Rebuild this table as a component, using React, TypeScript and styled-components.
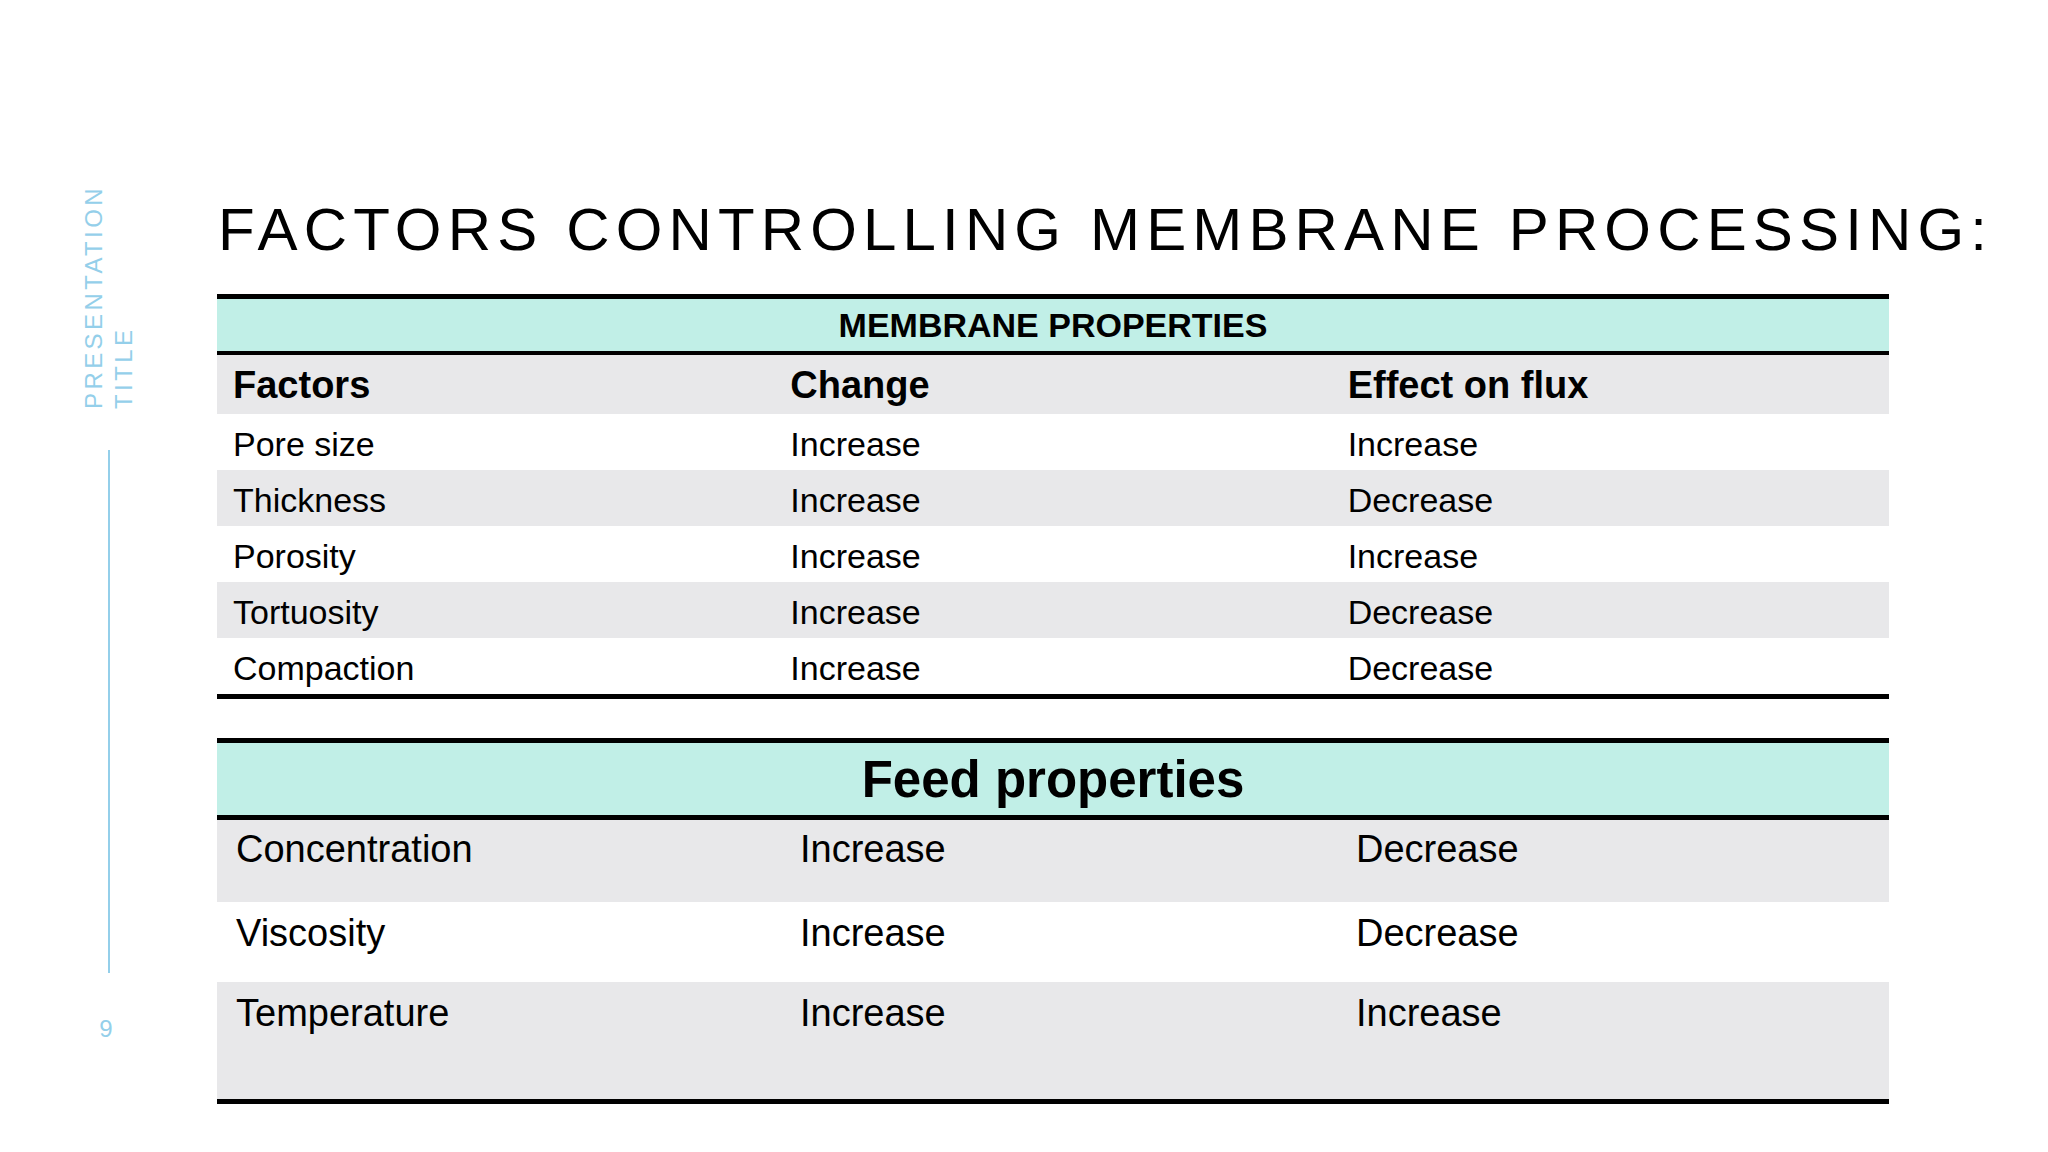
import React from "react";
import styled, { createGlobalStyle } from "styled-components";

const GlobalStyle = createGlobalStyle`
  html, body {
    margin: 0;
    padding: 0;
    background: #ffffff;
  }
  body {
    font-family: "Liberation Sans", Arial, Helvetica, sans-serif;
    color: #000000;
  }
  * {
    box-sizing: border-box;
  }
`;

const ACCENT = "#94cfea";
const TEAL = "#c1efe7";
const GRAY = "#e8e8ea";

const Slide = styled.div`
  width: 2048px;
  height: 1152px;
  display: flex;
  overflow: hidden;
  background: #ffffff;
`;

const Sidebar = styled.aside`
  width: 217px;
  flex: none;
  display: flex;
  flex-direction: column;
  align-items: center;
  padding-top: 185px;
  color: ${ACCENT};
`;

const SideTitle = styled.div`
  writing-mode: vertical-rl;
  transform: rotate(180deg);
  font-size: 24px;
  line-height: 30px;
  letter-spacing: 3.4px;
  text-transform: uppercase;
  white-space: nowrap;
`;

const SideRule = styled.div`
  width: 2px;
  height: 523px;
  margin-top: 41px;
  background: ${ACCENT};
`;

const PageNumber = styled.div`
  margin-top: 42px;
  margin-right: 5px;
  font-size: 24px;
  line-height: 28px;
`;

const Main = styled.main`
  flex: 1;
  display: flex;
  flex-direction: column;
  padding-top: 195px;
`;

const Title = styled.h1`
  margin: 0 0 29px 1px;
  font-size: 60px;
  line-height: 70px;
  font-weight: 400;
  letter-spacing: 6.15px;
  white-space: nowrap;
`;

const Table = styled.section<{ $gap?: number }>`
  width: 1672px;
  border-top: 5px solid #000;
  border-bottom: 5px solid #000;
  margin-bottom: ${(p) => p.$gap ?? 0}px;
`;

const Band = styled.div<{ $height: number; $size: number; $rule: number }>`
  height: ${(p) => p.$height + p.$rule}px;
  display: flex;
  align-items: center;
  justify-content: center;
  background: ${TEAL};
  border-bottom: ${(p) => p.$rule}px solid #000;
  font-size: ${(p) => p.$size}px;
  font-weight: 700;
`;

const Row = styled.div<{
  $shaded?: boolean;
  $height: number;
  $cols: string;
  $top?: boolean;
  $size: number;
  $bold?: boolean;
}>`
  display: grid;
  grid-template-columns: ${(p) => p.$cols};
  align-items: ${(p) => (p.$top ? "start" : "center")};
  height: ${(p) => p.$height}px;
  background: ${(p) => (p.$shaded ? GRAY : "#ffffff")};
  font-size: ${(p) => p.$size}px;
  font-weight: ${(p) => (p.$bold ? 700 : 400)};
`;

const Cell = styled.div<{ $pad: number; $padTop?: number }>`
  padding-left: ${(p) => p.$pad}px;
  padding-top: ${(p) => p.$padTop ?? 0}px;
  white-space: nowrap;
`;

const membrane = [
  ["Pore size", "Increase", "Increase"],
  ["Thickness", "Increase", "Decrease"],
  ["Porosity", "Increase", "Increase"],
  ["Tortuosity", "Increase", "Decrease"],
  ["Compaction", "Increase", "Decrease"],
];

const feed: { cells: string[]; height: number; padTop: number }[] = [
  { cells: ["Concentration", "Increase", "Decrease"], height: 82, padTop: 8 },
  { cells: ["Viscosity", "Increase", "Decrease"], height: 80, padTop: 10 },
  { cells: ["Temperature", "Increase", "Increase"], height: 117, padTop: 10 },
];

const COLS_A = "1fr 1fr 1fr";
const COLS_B = "564px 556px 1fr";

export default function App() {
  return (
    <>
      <GlobalStyle />
      <Slide>
        <Sidebar>
          <SideTitle>
            Presentation
            <br />
            Title
          </SideTitle>
          <SideRule />
          <PageNumber>9</PageNumber>
        </Sidebar>
        <Main>
          <Title>FACTORS CONTROLLING MEMBRANE PROCESSING:</Title>

          <Table $gap={39}>
            <Band $height={52} $size={34} $rule={4}>
              MEMBRANE PROPERTIES
            </Band>
            <Row $shaded $height={59} $cols={COLS_A} $size={38} $bold>
              <Cell $pad={16} $padTop={2}>Factors</Cell>
              <Cell $pad={16} $padTop={2}>Change</Cell>
              <Cell $pad={16} $padTop={2}>Effect on flux</Cell>
            </Row>
            {membrane.map((r, i) => (
              <Row
                key={r[0]}
                $shaded={i % 2 === 1}
                $height={56}
                $cols={COLS_A}
                $size={34}
              >
                {r.map((c, j) => (
                  <Cell key={j} $pad={16} $padTop={4}>
                    {c}
                  </Cell>
                ))}
              </Row>
            ))}
          </Table>

          <Table>
            <Band $height={72} $size={51} $rule={5}>
              Feed properties
            </Band>
            {feed.map((r, i) => (
              <Row
                key={r.cells[0]}
                $shaded={i % 2 === 0}
                $height={r.height}
                $cols={COLS_B}
                $size={38}
                $top
              >
                {r.cells.map((c, j) => (
                  <Cell key={j} $pad={19} $padTop={r.padTop}>
                    {c}
                  </Cell>
                ))}
              </Row>
            ))}
          </Table>
        </Main>
      </Slide>
    </>
  );
}
